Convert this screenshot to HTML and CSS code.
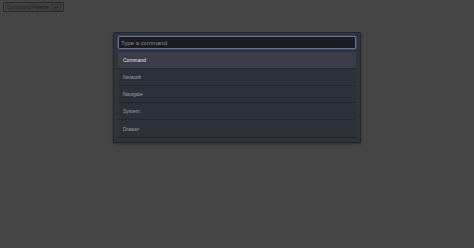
FILE: index.html
```html
<!DOCTYPE html>
<html>
  <head>
    <title>Command Palette</title>
    <meta charset="utf-8">
    <meta name="viewport" content="width=device-width, initial-scale=1">
    <link rel="stylesheet" href="styles.css">
  </head>

  <body>
    <div class="page">

      <button class="trigger">
        <span class="trigger-label">Command Palette</span>
        <kbd class="trigger-key">⌘P</kbd>
      </button>

      <div class="overlay">
        <div class="palette">
          <input class="search" type="text" placeholder="Type a command">

          <ul class="results">
            <li class="item active">Command</li>
            <li class="item">Network</li>
            <li class="item">Navigate</li>
            <li class="item">System</li>
            <li class="item">Drawer</li>
          </ul>
        </div>
      </div>

    </div>
  </body>
</html>
```

FILE: styles.css
```css
html, body {
  margin: 0;
  height: 100vh;
  overflow: hidden;
}

* {
  margin: 0;
  padding: 0;
  box-sizing: border-box;
  font-family: "Liberation Sans", Arial, sans-serif;
}

.page {
  background-color: #454545;
  height: 100%;
  width: 100vw;
  padding: 2px 3px;
}

.trigger {
  display: flex;
  align-items: center;
  gap: 2px;
  height: 10px;
  padding: 0 2px 0 3px;
  background-color: #404040;
  border: 1px solid #2a2a2a;
  border-radius: 1px;
  color: #222;
  font-size: 5.2px;
}

.trigger-key {
  font-family: "Liberation Sans", Arial, sans-serif;
  font-size: 4px;
  color: #222;
  border: 1px solid #333;
  border-radius: 1px;
  padding: 0 1px;
  line-height: 5px;
}

.overlay {
  display: flex;
  justify-content: center;
  padding: 20px 0 0 0;
}

.palette {
  width: 248px;
  background-color: #30333a;
  border: 1px solid #26282d;
  border-radius: 2px;
  box-shadow: 0 1px 3px rgba(0, 0, 0, 0.35);
  padding: 3px 4px 4px 4px;
}

.search {
  display: block;
  width: 100%;
  height: 13px;
  background-color: #1c1c23;
  border: 1px solid #6471a3;
  border-radius: 1px;
  box-shadow: 0 0 0 1px #3c4258;
  color: #ddd;
  font-size: 6px;
  padding: 0 2px;
  outline: none;
}

.search::placeholder {
  color: #8a8c96;
}

.results {
  list-style: none;
  margin-top: 3px;
  background-color: #2c3039;
  border-bottom: 1px solid #1f2228;
}

.item {
  height: 17px;
  display: flex;
  align-items: center;
  padding-left: 5px;
  font-size: 5px;
  color: #9ea2ab;
  border-bottom: 1px solid #23262d;
}

.item:last-child {
  border-bottom: none;
}

.item.active {
  background-color: #3b3e48;
  color: #e6e6ea;
}
```
